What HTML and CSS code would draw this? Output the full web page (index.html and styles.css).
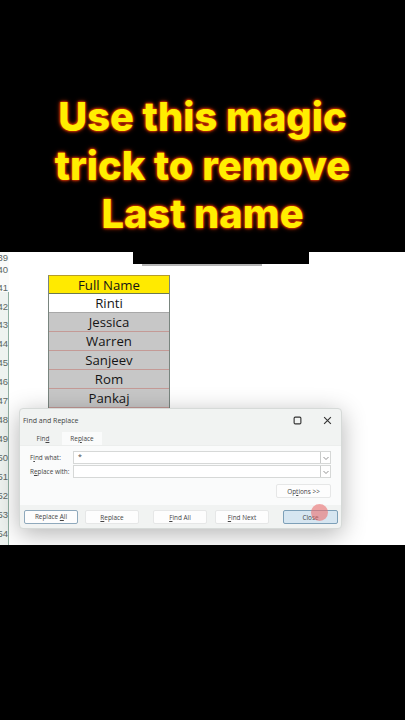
FILE: index.html
```html
<!DOCTYPE html>
<html lang="en">
<head>
<meta charset="utf-8">
<title>Use this magic trick to remove Last name</title>
<link rel="stylesheet" href="styles.css">
</head>
<body>
<main class="page">
  <header class="hero">
    <h1 class="headline">Use this magic<br>trick to remove<br>Last name</h1>
  </header>
  <section class="sheet">
    <div class="gutter">
      <span class="num n-a">39</span><span class="num n-b">40</span><span class="num n-c">41</span>
      <span class="num">42</span><span class="num">43</span><span class="num">44</span><span class="num">45</span><span class="num">46</span><span class="num">47</span><span class="num">48</span><span class="num">49</span><span class="num">50</span><span class="num">51</span><span class="num">52</span><span class="num">53</span><span class="num">54</span>
    </div>
    <div class="tab-cover"></div>
    <div class="names">
      <div class="cell head">Full Name</div>
      <div class="cell first">Rinti</div>
      <div class="cell">Jessica</div>
      <div class="cell">Warren</div>
      <div class="cell">Sanjeev</div>
      <div class="cell">Rom</div>
      <div class="cell">Pankaj</div>
    </div>
    <div class="dialog">
      <div class="titlebar">
        <span class="title">Find and Replace</span>
        <div class="win">
          <svg class="win-icon" viewBox="0 0 8 8"><rect x="1" y="1" width="6" height="6" rx="1"/></svg>
          <svg class="win-icon" viewBox="0 0 8 8"><path d="M1 1l6 6M7 1l-6 6"/></svg>
        </div>
      </div>
      <div class="tabs">
        <span class="tab">Fin<u>d</u></span>
        <span class="tab active">Re<u>p</u>lace</span>
      </div>
      <div class="panel">
        <div class="field">
          <span class="label">F<u>i</u>nd what:</span>
          <div class="input"><span class="value">*</span><span class="drop"><svg viewBox="0 0 8 8"><path d="M1.5 3l2.5 2.5L6.5 3"/></svg></span></div>
        </div>
        <div class="field">
          <span class="label">R<u>e</u>place with:</span>
          <div class="input"><span class="value"></span><span class="drop"><svg viewBox="0 0 8 8"><path d="M1.5 3l2.5 2.5L6.5 3"/></svg></span></div>
        </div>
        <div class="options"><span class="btn opt">Op<u>t</u>ions &gt;&gt;</span></div>
      </div>
      <div class="actions">
        <span class="btn primary">Replace <u>A</u>ll</span>
        <span class="btn plain"><u>R</u>eplace</span>
        <span class="btn plain find-all"><u>F</u>ind All</span>
        <span class="btn plain find-next"><u>F</u>ind Next</span>
        <span class="btn close">Close<span class="pointer"></span></span>
      </div>
    </div>
  </section>
  <div class="footer-band"></div>
</main>
</body>
</html>
```
FILE: styles.css
```css
* { box-sizing: border-box; }
html, body { margin: 0; height: 100%; background: #000; }
.page { width: 405px; height: 720px; display: flex; flex-direction: column; overflow: hidden; background: #000; }
.hero { height: 252px; display: flex; justify-content: center; padding-top: 93px; }
.headline {
  margin: 0; text-align: center; color: #ffee00; white-space: nowrap;
  font: 800 39.8px/48.5px "Inter", "Liberation Sans", sans-serif;
  letter-spacing: 0;
  text-shadow: 0 0 1px #e02a00, 0 0 2px #e02a00, 0 0 3px #e04000, 0 0 5px #b83000;
}
.sheet { position: relative; height: 293px; background: #fff; display: flex; }
.gutter { width: 9px; flex: none; display: flex; flex-direction: column; align-items: flex-end; overflow: hidden; background: linear-gradient(#fafbfa 40px, #eef3f0 40px); font: 9.5px/19px "Liberation Sans", sans-serif; color: #5c6864; padding: 44.5px 1px 0 0; position: relative; }
.gutter::after { content: ""; position: absolute; right: 0; top: 40px; bottom: 0; width: 1px; background: #8fb0a2; }
.num { height: 18.95px; flex: none; display: block; }
.n-a { position: absolute; top: -4px; right: 1px; }
.n-b { position: absolute; top: 8px; right: 1px; }
.n-c { position: absolute; top: 26px; right: 1px; }
.tab-cover { position: absolute; left: 133px; top: 0; width: 176px; height: 12px; background: #000; }
.tab-cover::after { content: ""; position: absolute; left: 9px; right: 47px; top: 12px; height: 2px; background: #b5b5b5; }
.names { width: 122px; margin: 23px 0 0 39px; align-self: flex-start; border: 1px solid #79857f; border-top-color: #b59c2a; border-bottom: 0; }
.cell { height: 19px; background: #c7c7c7; border-bottom: 1px solid #c49a96; color: #151515; text-align: center; font: 13.2px/19px "Open Sans", "Liberation Sans", sans-serif; }
.cell.head { height: 18px; line-height: 18px; background: #ffea00; border-bottom-color: #6c7a50; }
.cell.first { background: #fff; border-bottom-color: #a8a8a8; }
.dialog { position: absolute; left: 19px; top: 156px; width: 323px; height: 121px; background: #f1f3f2; border: 1px solid #d6dad8; border-radius: 4px; box-shadow: 0 5px 24px rgba(0,0,0,.3); font: 6.4px "Open Sans", "Liberation Sans", sans-serif; color: #444; display: flex; flex-direction: column; }
.titlebar { height: 23px; display: flex; justify-content: space-between; align-items: center; padding: 0 9px 0 3px; flex: none; }
.title { font-size: 7px; color: #3f4442; }
.win { display: flex; gap: 21px; }
.win-icon { width: 9px; height: 9px; fill: none; stroke: #333; stroke-width: 1; }
.tabs { display: flex; height: 13px; padding-left: 4px; flex: none; }
.tab { width: 38px; text-align: center; line-height: 14px; }
.tab.active { width: 40px; background: #fafbfb; }
.panel { height: 60px; flex: none; background: #fafbfb; border-top: 1px solid #eceeed; padding: 5px 10px 0 10px; position: relative; }
.field { display: flex; align-items: center; height: 13px; margin-bottom: 1px; }
.label { width: 43px; flex: none; }
.input { flex: 1; height: 13px; background: #fff; border: 1px solid #d6d8d7; display: flex; justify-content: space-between; }
.value { padding: 0 0 0 4px; line-height: 9px; font-size: 7px; }
.drop { width: 10px; border-left: 1px solid #c9cbca; display: flex; align-items: center; justify-content: center; }
.drop svg { width: 8px; height: 8px; fill: none; stroke: #777; stroke-width: .8; }
.options { display: flex; justify-content: flex-end; margin-top: 6px; }
.btn { display: block; text-align: center; line-height: 13px; background: #fdfdfd; border: 1px solid #e6e7e7; border-radius: 2px; height: 14px; }
.opt { width: 55px; }
.actions { flex: 1; display: flex; align-items: center; padding: 0 3px 0 4px; }
.primary { width: 54px; border: 1.5px solid #8fa9bc; line-height: 12px; }
.plain { width: 54px; }
.plain:nth-child(2) { margin-left: 7px; }
.find-all { margin-left: 14px; }
.find-next { margin-left: 8px; }
.close { width: 55px; margin-left: 14px; background: #d6e6f1; border: 1px solid #7da0b8; position: relative; }
.pointer { position: absolute; left: 27px; top: -7px; width: 17px; height: 17px; border-radius: 50%; background: rgba(235,110,110,.6); }
.footer-band { flex: 1; background: #000; }
```
